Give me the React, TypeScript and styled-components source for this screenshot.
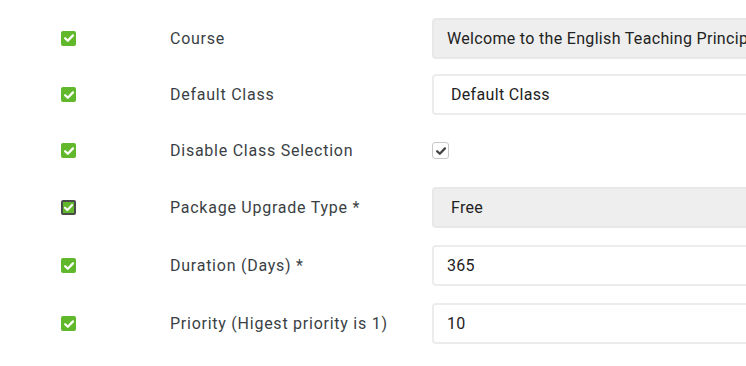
import React from "react";
import styled, { createGlobalStyle } from "styled-components";

const Global = createGlobalStyle`
  html, body { margin: 0; padding: 0; background: #fff; overflow: hidden; }
  body { font-family: Roboto, "Noto Sans", Arial, sans-serif; }
`;

const Form = styled.div`
  display: grid;
  grid-template-columns: 109px 262px 460px;
  grid-template-rows: 57px 56px 56px 58px 58px 58px;
  align-items: center;
  padding: 9.5px 0 0 61px;
  width: 900px;
`;

const GreenBox = styled.span<{ $focused?: boolean }>`
  width: 15px;
  height: 15px;
  box-sizing: border-box;
  border-radius: 2px;
  background: #61b82b;
  display: flex;
  align-items: center;
  justify-content: center;
  border: ${(p) => (p.$focused ? "2px solid #4a4a4a" : "none")};
  svg { display: block; }
`;

const Label = styled.label`
  font-size: 16px;
  letter-spacing: 0.75px;
  color: #3a3f45;
`;

const Field = styled.div<{ $disabled?: boolean; $pad?: number }>`
  height: 41px;
  box-sizing: border-box;
  border-radius: 4px;
  border: 2px solid ${(p) => (p.$disabled ? "#e8e8e8" : "#ececec")};
  background: ${(p) => (p.$disabled ? "#eeeeee" : "#ffffff")};
  display: flex;
  align-items: center;
  padding-left: ${(p) => p.$pad ?? 13}px;
  font-size: 16px;
  letter-spacing: 0.32px;
  color: #222;
  white-space: nowrap;
  overflow: hidden;
`;

const SmallBox = styled.span`
  width: 17px;
  height: 17px;
  box-sizing: border-box;
  border: 1px solid #c8c8c8;
  border-radius: 3px;
  background: #fff;
  display: flex;
  align-items: center;
  justify-content: center;
`;

const Check = ({ color, size }: { color: string; size: number }) => (
  <svg width={size} height={size} viewBox="0 0 10 10">
    <path d="M1.8 5.2 L4 7.3 L8.3 2.8" fill="none" stroke={color} strokeWidth="1.9" strokeLinecap="round" strokeLinejoin="round" />
  </svg>
);

type Row = { label: string; kind: "field" | "check"; value?: string; disabled?: boolean; pad?: number; focused?: boolean };

const rows: Row[] = [
  { label: "Course", kind: "field", value: "Welcome to the English Teaching Principles Course", disabled: true, pad: 13 },
  { label: "Default Class", kind: "field", value: "Default Class", pad: 17 },
  { label: "Disable Class Selection", kind: "check" },
  { label: "Package Upgrade Type *", kind: "field", value: "Free", disabled: true, pad: 17, focused: true },
  { label: "Duration (Days) *", kind: "field", value: "365", pad: 13 },
  { label: "Priority (Higest priority is 1)", kind: "field", value: "10", pad: 13 },
];

export default function App() {
  return (
    <>
      <Global />
      <Form>
        {rows.map((r) => (
          <React.Fragment key={r.label}>
            <GreenBox $focused={r.focused}>
              <Check color="#fff" size={r.focused ? 11 : 12} />
            </GreenBox>
            <Label>{r.label}</Label>
            {r.kind === "check" ? (
              <SmallBox>
                <Check color="#444" size={12} />
              </SmallBox>
            ) : (
              <Field $disabled={r.disabled} $pad={r.pad}>{r.value}</Field>
            )}
          </React.Fragment>
        ))}
      </Form>
    </>
  );
}
